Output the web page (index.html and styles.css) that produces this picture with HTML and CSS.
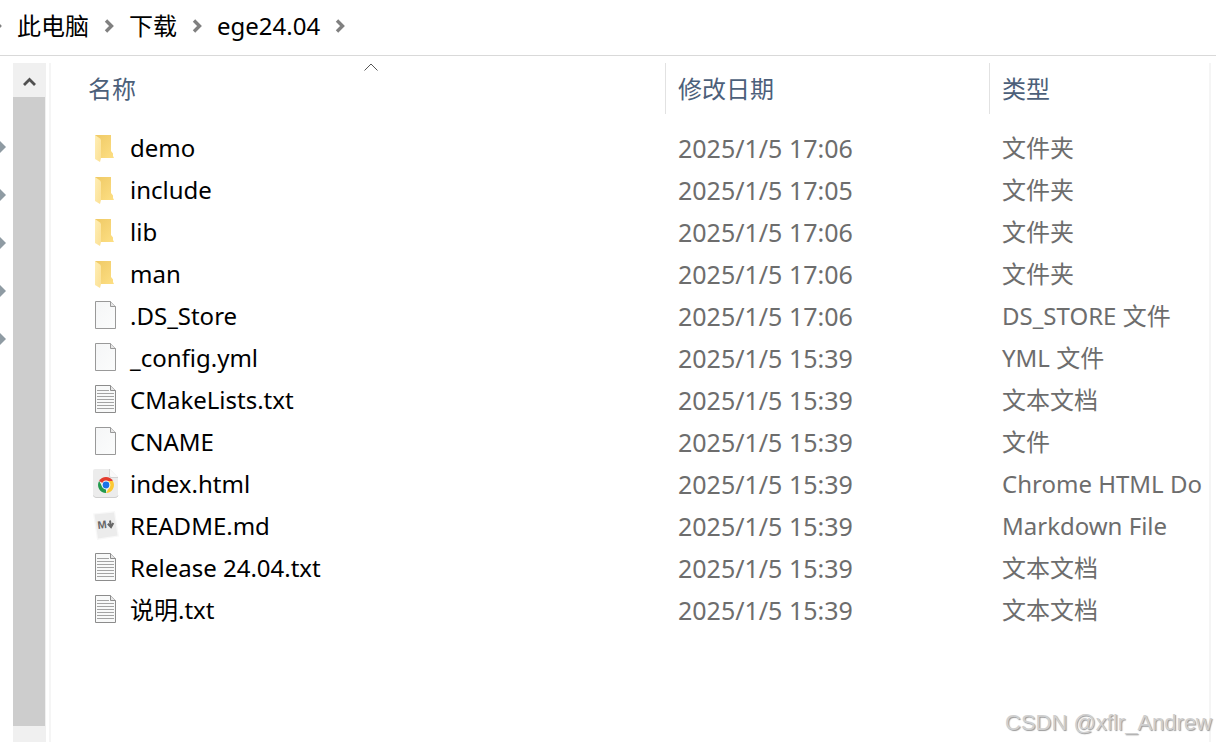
FILE: index.html
```
<!DOCTYPE html>
<html lang="zh-CN">

<head>
    <meta charset="UTF-8">
    <meta name="viewport" content="width=device-width, initial-scale=1.0">
    <title>ege24.04</title>
    <link rel="stylesheet" href="styles.css">
</head>

<body>
    <!-- shared icons -->
    <svg class="sprite" aria-hidden="true">
        <defs>
            <linearGradient id="folderBack" x1="0" y1="0" x2="1" y2="1">
                <stop offset="0" stop-color="#efc965" />
                <stop offset="1" stop-color="#fddf84" />
            </linearGradient>
            <linearGradient id="folderFront" x1="0" y1="0" x2="1" y2="1">
                <stop offset="0" stop-color="#ffeeb5" />
                <stop offset="1" stop-color="#fbe094" />
            </linearGradient>
            <linearGradient id="paper" x1="0" y1="0" x2="1" y2="1">
                <stop offset="0" stop-color="#f5f6f7" />
                <stop offset="1" stop-color="#fbfcfc" />
            </linearGradient>
        </defs>
        <symbol id="chevron" viewBox="0 0 10 14">
            <path d="M2 1.5 L7.5 7 L2 12.5" fill="none" stroke="#808080" stroke-width="3.4" />
        </symbol>
        <symbol id="folder" viewBox="0 0 28 30">
            <path d="M3 2H19V18L21 20.5V23L22 25H8Z" fill="url(#folderBack)" />
            <path d="M3 2L8 5.5L9 7V25L8 29L3 26Z" fill="url(#folderFront)" />
        </symbol>
        <symbol id="file" viewBox="0 0 28 30">
            <path d="M3.5 .5H18.5L23.5 5.5V27.5H3.5Z" fill="url(#paper)" stroke="#999" />
            <path d="M18.5 .5V5.5H23.5" fill="#e6e6e6" stroke="#999" />
        </symbol>
        <symbol id="text" viewBox="0 0 28 30">
            <path d="M3.5 .5H18.5L23.5 5.5V27.5H3.5Z" fill="#f8f9f9" stroke="#8c8c8c" />
            <path d="M18.5 .5V5.5H23.5" fill="#e6e6e6" stroke="#8c8c8c" />
            <path d="M5 5.5H17M5 8.5H22M5 11.5H22M5 14.5H22M5 17.5H22M5 20.5H22M5 23.5H22" stroke="#a3a3a3" />
        </symbol>
        <symbol id="chrome" viewBox="0 0 28 30">
            <path d="M3 0H18L26 8V26Q26 28 24 28H3Q1 28 1 26V2Q1 0 3 0Z" fill="#ececec" />
            <path d="M1.5 26.5Q2 28.5 4 28.5H23Q25.5 28.5 26 26.5" fill="none" stroke="#cfcfcf" />
            <path d="M17.5 0L26 8.5H19Q17.5 8.5 17.5 7Z" fill="#fafafa" />
            <path d="M17.5 0V7Q17.5 8.5 19 8.5H26" fill="none" stroke="#cbcbcb" stroke-width=".8" />
            <path d="M14 16L7.1 12A8 8 0 0 1 20.9 12Z" fill="#e33b2e" />
            <path d="M14 16L14 24A8 8 0 0 1 7.1 12L10.5 18Z" fill="#229a4d" />
            <path d="M14 12H20.9A8 8 0 0 1 14 24L17.5 18Z" fill="#fcc934" />
            <circle cx="14" cy="16" r="4.4" fill="#fff" />
            <circle cx="14" cy="16" r="3.4" fill="#1a73e8" />
        </symbol>
    </svg>

    <nav class="breadcrumb" aria-label="路径">
        <svg class="chevron chevron-cut"><use href="#chevron" /></svg>
        <a href="#">此电脑</a>
        <svg class="chevron"><use href="#chevron" /></svg>
        <a href="#">下载</a>
        <svg class="chevron"><use href="#chevron" /></svg>
        <a href="#">ege24.04</a>
        <svg class="chevron"><use href="#chevron" /></svg>
    </nav>

    <main class="explorer">
        <div class="pins">
            <span class="pin"></span>
            <span class="pin"></span>
            <span class="pin"></span>
            <span class="pin"></span>
            <span class="pin"></span>
        </div>

        <div class="scrollbar">
            <button type="button" class="scroll-up" aria-label="向上滚动">
                <svg width="13" height="10" viewBox="0 0 13 10">
                    <path d="M1 8L6.5 2.5L12 8" fill="none" stroke="#505050" stroke-width="2.8" />
                </svg>
            </button>
            <div class="thumb"></div>
        </div>

        <div class="files">
            <table class="file-table">
                <thead>
                    <tr>
                        <th class="col-name">
                            <button type="button" class="sort">名称</button>
                            <svg class="sort-mark" width="14" height="8" viewBox="0 0 14 8">
                                <path d="M.5 7.5L7 1L13.5 7.5" fill="none" stroke="#555" />
                            </svg>
                        </th>
                        <th class="col-date"><button type="button" class="sort">修改日期</button></th>
                        <th class="col-type"><button type="button" class="sort">类型</button></th>
                    </tr>
                </thead>
                <tbody>
                    <tr>
                        <td><div class="name"><svg class="icon"><use href="#folder" /></svg>demo</div></td>
                        <td class="date">2025/1/5 17:06</td>
                        <td>文件夹</td>
                    </tr>
                    <tr>
                        <td><div class="name"><svg class="icon"><use href="#folder" /></svg>include</div></td>
                        <td class="date">2025/1/5 17:05</td>
                        <td>文件夹</td>
                    </tr>
                    <tr>
                        <td><div class="name"><svg class="icon"><use href="#folder" /></svg>lib</div></td>
                        <td class="date">2025/1/5 17:06</td>
                        <td>文件夹</td>
                    </tr>
                    <tr>
                        <td><div class="name"><svg class="icon"><use href="#folder" /></svg>man</div></td>
                        <td class="date">2025/1/5 17:06</td>
                        <td>文件夹</td>
                    </tr>
                    <tr>
                        <td><div class="name"><svg class="icon"><use href="#file" /></svg>.DS_Store</div></td>
                        <td class="date">2025/1/5 17:06</td>
                        <td>DS_STORE 文件</td>
                    </tr>
                    <tr>
                        <td><div class="name"><svg class="icon"><use href="#file" /></svg>_config.yml</div></td>
                        <td class="date">2025/1/5 15:39</td>
                        <td>YML 文件</td>
                    </tr>
                    <tr>
                        <td><div class="name"><svg class="icon"><use href="#text" /></svg>CMakeLists.txt</div></td>
                        <td class="date">2025/1/5 15:39</td>
                        <td>文本文档</td>
                    </tr>
                    <tr>
                        <td><div class="name"><svg class="icon"><use href="#file" /></svg>CNAME</div></td>
                        <td class="date">2025/1/5 15:39</td>
                        <td>文件</td>
                    </tr>
                    <tr>
                        <td><div class="name"><svg class="icon"><use href="#chrome" /></svg>index.html</div></td>
                        <td class="date">2025/1/5 15:39</td>
                        <td>Chrome HTML Do</td>
                    </tr>
                    <tr>
                        <td>
                            <div class="name">
                                <svg class="icon" viewBox="0 0 28 30">
                                    <path d="M1 2.5L23 0L27 25.5L5 29Z" fill="#f8f8f8" />
                                    <path d="M2.5 3.5L22 1.5L25.5 24.5L6 27.5Z" fill="#ececec" />
                                    <text class="md-mark" x="6" y="18" transform="rotate(-7 6 18)">M</text>
                                    <path d="M18 9.5L18.8 15M15.8 12.8L19 16L21.3 12" fill="none" stroke="#666" stroke-width="2" />
                                </svg>README.md
                            </div>
                        </td>
                        <td class="date">2025/1/5 15:39</td>
                        <td>Markdown File</td>
                    </tr>
                    <tr>
                        <td><div class="name"><svg class="icon"><use href="#text" /></svg>Release 24.04.txt</div></td>
                        <td class="date">2025/1/5 15:39</td>
                        <td>文本文档</td>
                    </tr>
                    <tr>
                        <td><div class="name"><svg class="icon"><use href="#text" /></svg>说明.txt</div></td>
                        <td class="date">2025/1/5 15:39</td>
                        <td>文本文档</td>
                    </tr>
                </tbody>
            </table>
        </div>
    </main>

    <div class="watermark">CSDN @xflr_Andrew</div>
</body>

</html>
```

FILE: styles.css
```
* {
    box-sizing: border-box;
}

body {
    display: flex;
    flex-direction: column;
    min-height: 100vh;
    margin: 0;
    background: #fff;
    color: #000;
    font-family: "Noto Sans", "Noto Sans CJK SC", sans-serif;
    font-size: 24px;
    line-height: 32px;
    position: relative;
    overflow-x: hidden;
}

button {
    padding: 0;
    border: none;
    background: none;
    color: inherit;
    font: inherit;
    cursor: pointer;
}

.sprite {
    position: absolute;
    width: 0;
    height: 0;
}

/* path bar */
.breadcrumb {
    display: flex;
    align-items: center;
    gap: 15px;
    height: 56px;
    padding-bottom: 4px;
    border-bottom: 1px solid #d9d9d9;
    overflow: hidden;
}

.breadcrumb a {
    color: #000;
    text-decoration: none;
}

.chevron {
    flex: none;
    width: 10px;
    height: 14px;
}

.chevron-cut {
    margin-left: -8px;
}

.explorer {
    display: flex;
    flex: 1;
    padding-top: 7px;
}

/* right half of the pinned markers in the side pane */
.pins {
    display: flex;
    flex-direction: column;
    gap: 36px;
    width: 13px;
    padding-top: 78px;
}

.pin {
    width: 6px;
    height: 12px;
    background: #8f9ba3;
    clip-path: polygon(0 0, 100% 50%, 0 100%);
}

.scrollbar {
    display: flex;
    flex-direction: column;
    width: 33px;
    padding-bottom: 16px;
    background: #f0f0f0;
}

.scroll-up {
    display: flex;
    align-items: center;
    justify-content: center;
    height: 34px;
    padding-top: 4px;
}

.thumb {
    flex: 1;
    width: 32px;
    background: #cdcdcd;
}

.files {
    flex: 1;
    min-width: 0;
    margin: 0 5px 0 3px;
    border: solid #f5f5f5;
    border-width: 0 2px;
}

.file-table {
    width: 100%;
    table-layout: fixed;
    border-collapse: collapse;
}

th,
td {
    padding: 0;
    text-align: left;
    font-weight: normal;
    white-space: nowrap;
}

th {
    position: relative;
    height: 64px;
    vertical-align: top;
}

td {
    height: 42px;
    padding-left: 13px;
    color: #6d6d6d;
}

td:first-child {
    padding-left: 41px;
    color: #000;
}

.date {
    font-size: 25px;
}

.col-name {
    width: 614px;
}

.col-date {
    width: 324px;
}

.sort {
    display: block;
    width: 100%;
    height: 51px;
    padding-left: 12px;
    border-left: 1px solid #e2e2e2;
    color: #4c607a;
    text-align: left;
}

.col-name .sort {
    padding-left: 37px;
    border-left: none;
}

.sort-mark {
    position: absolute;
    top: 0;
    left: 313px;
}

.name {
    display: flex;
    align-items: center;
    gap: 10px;
}

.icon {
    flex: none;
    width: 28px;
    height: 30px;
}

.md-mark {
    font-family: "Liberation Sans", sans-serif;
    font-size: 11px;
    font-weight: bold;
    fill: #666;
}

.watermark {
    position: absolute;
    right: 4px;
    bottom: 3px;
    color: #d0d0d0;
    font-family: "Liberation Sans", Arial, sans-serif;
    font-size: 22px;
    text-shadow: 1px 1px 1px #999;
}
```
